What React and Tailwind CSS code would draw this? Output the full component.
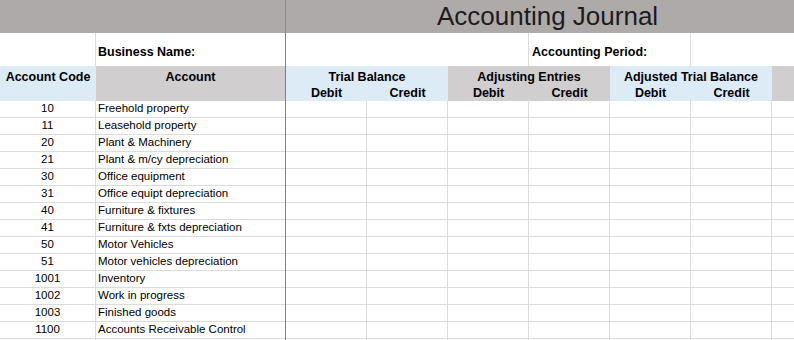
import React from "react";

const COLS = "grid grid-cols-[96px_190px_81px_81px_81px_81px_81px_81px_1fr]";

const accounts = [
  ["10", "Freehold property"],
  ["11", "Leasehold property"],
  ["20", "Plant & Machinery"],
  ["21", "Plant & m/cy depreciation"],
  ["30", "Office equipment"],
  ["31", "Office equipt depreciation"],
  ["40", "Furniture & fixtures"],
  ["41", "Furniture & fxts depreciation"],
  ["50", "Motor Vehicles"],
  ["51", "Motor vehicles depreciation"],
  ["1001", "Inventory"],
  ["1002", "Work in progress"],
  ["1003", "Finished goods"],
  ["1100", "Accounts Receivable Control"],
  ["", ""],
];

function GroupHeader({ title, bg }) {
  return (
    <div className={`col-span-2 flex flex-col pt-[3px] ${bg}`}>
      <div className="text-center leading-[16px]">{title}</div>
      <div className="grid grid-cols-2 leading-[16px]">
        <div className="text-center">Debit</div>
        <div className="text-center">Credit</div>
      </div>
    </div>
  );
}

export default function App() {
  return (
    <div className="w-[794px] h-[340px] overflow-hidden bg-white text-black font-['Liberation_Sans',Arial,sans-serif]">

      {/* title */}
      <div className={`${COLS} h-[33px] bg-[#aeaaaa]`}>
        <div className="col-span-2 border-r border-[#8c8a8a]"></div>
        <div className="col-span-7 pl-[151px] pt-[1px] text-[26px] leading-[30px] text-[#1c1c1c]">
          Accounting Journal
        </div>
      </div>

      {/* business / period */}
      <div className={`${COLS} h-[33px] text-[12.5px] font-bold`}>
        <div className="border-r border-[#dcdcdc]"></div>
        <div className="border-r border-[#7f7f7f] flex items-end pl-[2px] pb-[4px]">Business Name:</div>
        <div className="col-span-3 border-r border-[#dcdcdc]"></div>
        <div className="col-span-2 border-r border-[#dcdcdc] flex items-end pl-[3px] pb-[4px]">Accounting Period:</div>
        <div className="col-span-2"></div>
      </div>

      {/* column headings */}
      <div className={`${COLS} h-[34px] border-b border-[#9e9e9e] text-[12.5px] font-bold`}>
        <div className="bg-[#ddebf7] text-center pt-[3px] leading-[16px]">Account Code</div>
        <div className="bg-[#d0cece] border-r border-[#7f7f7f] text-center pt-[3px] leading-[16px]">Account</div>
        <GroupHeader title="Trial Balance" bg="bg-[#ddebf7]" />
        <GroupHeader title="Adjusting Entries" bg="bg-[#d0cece]" />
        <GroupHeader title="Adjusted Trial Balance" bg="bg-[#ddebf7]" />
        <div className="bg-[#d0cece]"></div>
      </div>

      {/* rows */}
      {accounts.map(([code, name], i) => (
        <div key={i} className={`${COLS} h-[17px] text-[11.5px] leading-[17px]`}>
          <div className="border-r border-b border-[#dcdcdc] text-center">{code}</div>
          <div className="border-r border-b border-r-[#7f7f7f] border-b-[#dcdcdc] pl-[2px] whitespace-nowrap">{name}</div>
          <div className="border-r border-b border-[#dcdcdc]"></div>
          <div className="border-r border-b border-[#dcdcdc]"></div>
          <div className="border-r border-b border-[#dcdcdc]"></div>
          <div className="border-r border-b border-[#dcdcdc]"></div>
          <div className="border-r border-b border-[#dcdcdc]"></div>
          <div className="border-r border-b border-[#dcdcdc]"></div>
          <div className="border-b border-[#dcdcdc]"></div>
        </div>
      ))}

    </div>
  );
}
